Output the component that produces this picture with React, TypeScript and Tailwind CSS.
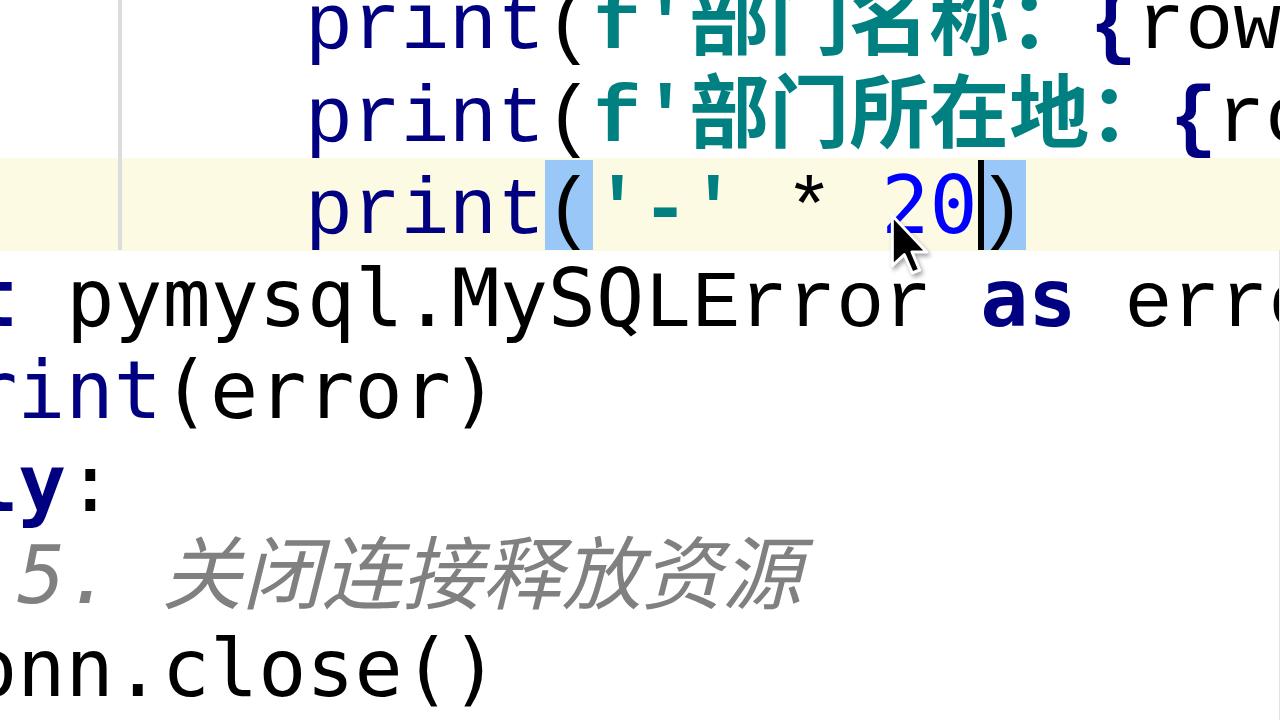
import React from "react";

// font stacks
const lib = "font-['Liberation_Mono','Noto_Sans_CJK_SC',monospace]";
const dv = "font-['DejaVu_Sans_Mono','Noto_Sans_CJK_SC',monospace]";
const cjk = "font-['Noto_Sans_CJK_SC',sans-serif]";

// token colours (PyCharm light theme)
const kw = "text-[#000080] font-bold";
const builtin = "text-[#000080]";
const str = "text-[#008080] font-bold";
const num = "text-[#0000ff]";
const comment = "text-[#808080] italic";

// brace-match box, lifted to fill the current-line band
const brace = "pt-[6px] bg-no-repeat bg-[length:100%_90px]";

function Line({ children, current }: { children: React.ReactNode; current?: boolean }) {
  return (
    <div
      className={`h-[92.5px] pt-[8px] leading-[92.5px] whitespace-pre text-[80px] text-black [&_span]:leading-[0] ${lib} ${
        current ? "bg-[#fdfae3]" : ""
      }`}
    >
      {children}
    </div>
  );
}

function MouseCursor() {
  return (
    <svg
      className="absolute left-[889px] top-[212px] drop-shadow-[2px_3px_2px_rgba(0,0,0,0.35)]"
      width="40"
      height="64"
      viewBox="0 0 12 19"
    >
      <path
        d="M1 1 L1 16 L4.6 12.7 L7 18.2 L9.2 17.3 L6.9 11.9 L11.3 11.9 Z"
        fill="#000"
        stroke="#fff"
        strokeWidth="0.9"
        strokeLinejoin="round"
      />
    </svg>
  );
}

export default function App() {
  return (
    <div className="relative w-[1280px] h-[720px] overflow-hidden bg-white">
      {/* code lines, column 0 sits off screen to the left */}
      <div className="flex flex-col -mt-[27px] -ml-[271px] w-[1600px]">
        <Line>
          {"            "}
          <span className={builtin}>print</span>
          <span>(</span>
          <span className={str}>f'</span>
          <span className={`${str} ${cjk}`}>部门名称：</span>
          <span className={kw}>{"{"}</span>
          <span>row[</span>
        </Line>
        <Line>
          {"            "}
          <span className={builtin}>print</span>
          <span>(</span>
          <span className={str}>f'</span>
          <span className={`${str} ${cjk}`}>部门所在地：</span>
          <span className={kw}>{"{"}</span>
          <span>row[</span>
        </Line>
        <Line current>
          {"            "}
          <span className={builtin}>print</span>
          <span className={`${brace} bg-[linear-gradient(#99c7f7,#99c7f7)]`}>(</span>
          <span className={str}>'-'</span>
          <span>{" * "}</span>
          <span className={`${num} ${dv}`}>20</span>
          <span className={`${brace} bg-[linear-gradient(90deg,#000_6px,#99c7f7_6px)]`}>)</span>
        </Line>
        <Line>
          <span className={`${kw} ${dv}`}>except</span>
          <span className={dv}> pymysql.MySQ</span>
          <span>LError </span>
          <span className={`${kw} ${dv}`}>as</span>
          <span> error:</span>
        </Line>
        <Line>
          {"    "}
          <span className={`${builtin} ${dv}`}>print</span>
          <span className={dv}>(error)</span>
        </Line>
        <Line>
          <span className={`${kw} ${dv}`}>finally</span>
          <span className={dv}>:</span>
        </Line>
        <Line>
          {"    "}
          <span className={`${comment} ${dv}`}>{"# 5. 关闭连接释放资源"}</span>
        </Line>
        <Line>
          {"    "}
          <span className={dv}>conn.close()</span>
        </Line>
      </div>

      {/* indent guide */}
      <div className="absolute left-[118px] top-0 w-[4px] h-[250px] bg-[#dcdcdc]" />
      {/* right margin line */}
      <div className="absolute right-0 top-[250px] w-[1px] h-[470px] bg-[#e2e2e2]" />

      <MouseCursor />
    </div>
  );
}
